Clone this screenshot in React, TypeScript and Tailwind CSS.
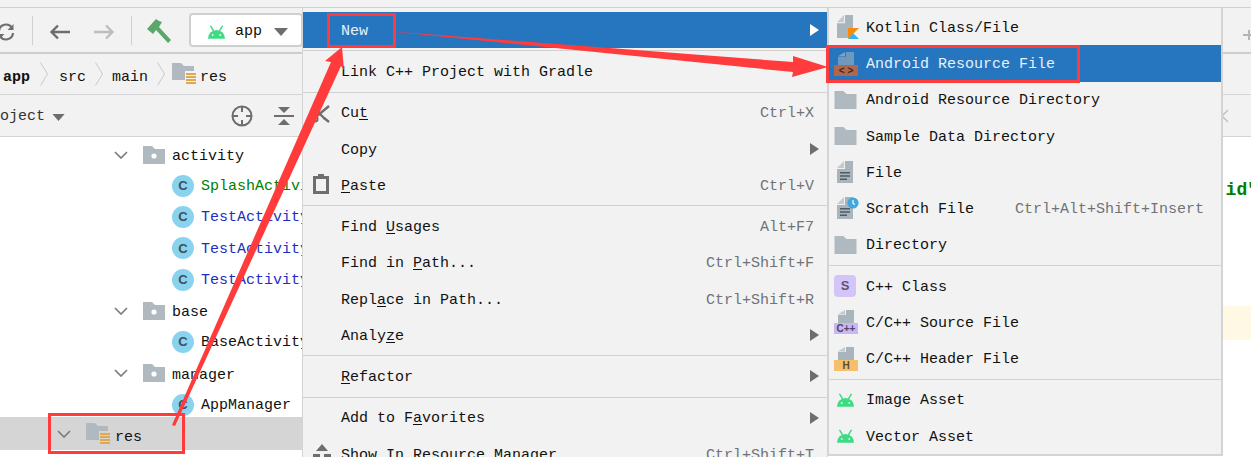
import type { ReactNode } from "react";

const RED = "#ff3b3b";

function Tri({ dir, color, className }: { dir: "down" | "right" | "up"; color: string; className: string }) {
  const points = dir === "down" ? "0,0 14,0 7,8" : dir === "right" ? "0,0 9,6 0,12" : "7,0 14,8 0,8";
  const box = dir === "right" ? "0 0 9 12" : "0 0 14 8";
  return (
    <svg viewBox={box} className={className}>
      <polygon points={points} fill={color} />
    </svg>
  );
}

function Android({ className }: { className: string }) {
  return (
    <svg viewBox="0 0 20 14" className={className}>
      <path d="M1 14a9 9 0 0 1 18 0z" fill="#3ddc84" />
      <path d="M4 1l2.6 4.4M16 1l-2.6 4.4" stroke="#3ddc84" strokeWidth="1.6" strokeLinecap="round" />
      <circle cx="6" cy="10.2" r="1" fill="#f2f2f2" />
      <circle cx="14" cy="10.2" r="1" fill="#f2f2f2" />
    </svg>
  );
}

function Folder({ className, dot }: { className: string; dot?: boolean }) {
  return (
    <svg viewBox="0 0 22 18" className={className}>
      <path d="M0 0h9l3 3h10v15H0z" fill="#afb9bf" />
      {dot && <circle cx="11" cy="10" r="2.6" fill="#fff" />}
    </svg>
  );
}

function ResFolder({ className }: { className: string }) {
  return (
    <svg viewBox="0 0 24 22" className={className}>
      <path d="M0 0h9l3 3h10v5H13v9H0z" fill="#afb9bf" />
      <path d="M14 10h10v2H14zM14 13h10v2H14zM14 16h10v2H14zM14 19h10v2H14z" fill="#e0a94f" />
    </svg>
  );
}

function Page({ className, lines, opacity = 1 }: { className: string; lines?: boolean; opacity?: number }) {
  return (
    <svg viewBox="0 0 16 22" preserveAspectRatio="none" className={className} style={{ opacity }}>
      <path d="M8 0h8v22H0V8h8z" fill="#a9b5bc" />
      <path d="M7 0v7H0z" fill="#c3cbd0" />
      {lines && <path d="M3 11h10v1.6H3zM3 14.2h10v1.6H3zM3 17.4h7V19H3z" fill="#4f5a60" />}
    </svg>
  );
}

function BarFile({ bar, label, text, dim }: { bar: string; label: string; text: string; dim?: boolean }) {
  return (
    <div className="flex w-[24px] flex-col items-end">
      <Page className="mr-[4px] h-[13px] w-[16px]" opacity={dim ? 0.55 : 1} />
      <div
        className="flex h-[11px] w-[24px] items-center justify-center font-['Liberation_Sans',sans-serif] text-[10px] leading-none font-bold whitespace-pre"
        style={{ backgroundColor: bar, color: text }}
      >
        {label}
      </div>
    </div>
  );
}

function Row({
  label,
  under,
  shortcut,
  arrow,
  icon,
  active,
  pad,
}: {
  label: string;
  under?: number;
  shortcut?: string;
  arrow?: boolean;
  icon?: ReactNode;
  active?: boolean;
  pad: string;
}) {
  return (
    <div className={`relative flex h-[36.25px] shrink-0 items-center pt-[4px] ${pad} ${active ? "bg-[#2675bf] text-[#e8f0f7]" : "text-[#111]"}`}>
      {icon}
      <span className="whitespace-pre">
        {under === undefined ? (
          label
        ) : (
          <>
            {label.slice(0, under)}
            <span className="underline decoration-1 underline-offset-2">{label[under]}</span>
            {label.slice(under + 1)}
          </>
        )}
      </span>
      {shortcut && <span className="ml-auto text-[#6f7378]">{shortcut}</span>}
      {arrow && <Tri dir="right" color={active ? "#ffffff" : "#6e6e6e"} className="absolute top-[12px] right-[8px] h-[12px] w-[9px]" />}
    </div>
  );
}

function Sep() {
  return (
    <div className="flex h-[5px] shrink-0 items-center">
      <div className="h-px w-full bg-[#d1d1d1]" />
    </div>
  );
}

function MainMenu() {
  const pad = "pl-[38px] pr-[13px]";
  return (
    <div className="absolute top-[8px] left-[302px] flex h-[449px] w-[526px] flex-col overflow-hidden border-x border-[#d4d4d4] bg-[#f2f2f2] pt-[4px]">
      <Row pad={pad} label="New" arrow active />
      <Sep />
      <Row pad={pad} label="Link C++ Project with Gradle" />
      <Sep />
      <Row
        pad={pad}
        label="Cut"
        under={2}
        shortcut="Ctrl+X"
        icon={
          <svg viewBox="0 0 18 18" className="absolute top-[10px] left-[9px] h-[18px] w-[18px]">
            <path d="M1 2l12 12M17 1L5 11" stroke="#6e6e6e" strokeWidth="2.4" fill="none" />
            <circle cx="3" cy="14" r="2.6" stroke="#6e6e6e" strokeWidth="2" fill="none" />
            <path d="M12 13l5 4" stroke="#6e6e6e" strokeWidth="2.4" />
          </svg>
        }
      />
      <Row pad={pad} label="Copy" arrow />
      <Row
        pad={pad}
        label="Paste"
        under={0}
        shortcut="Ctrl+V"
        icon={
          <svg viewBox="0 0 16 20" className="absolute top-[7px] left-[10px] h-[20px] w-[16px]">
            <path d="M1.5 3.5h13v15h-13z" stroke="#6e6e6e" strokeWidth="3" fill="none" />
            <path d="M5 0h6v5H5z" fill="#6e6e6e" />
          </svg>
        }
      />
      <Sep />
      <Row pad={pad} label="Find Usages" under={5} shortcut="Alt+F7" />
      <Row pad={pad} label="Find in Path..." under={8} shortcut="Ctrl+Shift+F" />
      <Row pad={pad} label="Replace in Path..." under={4} shortcut="Ctrl+Shift+R" />
      <Row pad={pad} label="Analyze" under={5} arrow />
      <Sep />
      <Row pad={pad} label="Refactor" under={0} arrow />
      <Sep />
      <Row pad={pad} label="Add to Favorites" under={8} arrow />
      <Row
        pad={pad}
        label="Show In Resource Manager"
        shortcut="Ctrl+Shift+T"
        icon={
          <svg viewBox="0 0 18 14" className="absolute top-[8px] left-[10px] h-[14px] w-[18px]">
            <polygon points="9,0 15,7 3,7" fill="#6e6e6e" />
            <path d="M0 10h7v4H0zM11 10h7v4h-7z" fill="#6e6e6e" />
          </svg>
        }
      />
    </div>
  );
}

function SubMenu() {
  const pad = "pl-[37px] pr-[17px]";
  const slot = "absolute left-[5px] flex items-center";
  return (
    <div className="absolute top-[8px] left-[828px] flex h-[448px] w-[395px] flex-col border-r-2 border-b-2 border-l border-[#d4d4d4] bg-[#f2f2f2] pt-px">
      <Row
        pad={pad}
        label="Kotlin Class/File"
        icon={
          <div className="absolute top-[6px] left-[8px] h-[24px] w-[22px]">
            <Page className="h-[23px] w-[16px]" />
            <svg viewBox="0 0 11 11" className="absolute right-0 bottom-0 h-[11px] w-[11px]">
              <path d="M0 0h11L5.5 5.5 0 11z" fill="#f88909" />
              <path d="M0 11L5.5 5.5 11 11z" fill="#29b6f6" />
            </svg>
          </div>
        }
      />
      <Row
        pad={pad}
        label="Android Resource File"
        active
        icon={
          <div className={`${slot} top-[7px]`}>
            <BarFile bar="#b0674d" label="< >" text="#3c2a22" dim />
          </div>
        }
      />
      <Row pad={pad} label="Android Resource Directory" icon={<Folder className={`${slot} top-[9px] h-[18px] w-[23px]`} />} />
      <Row pad={pad} label="Sample Data Directory" icon={<Folder className={`${slot} top-[9px] h-[18px] w-[23px]`} />} />
      <Row pad={pad} label="File" icon={<Page lines className="absolute top-[7px] left-[8px] h-[22px] w-[16px]" />} />
      <Row
        pad={pad}
        label="Scratch File"
        shortcut="Ctrl+Alt+Shift+Insert"
        icon={
          <div className="absolute top-[7px] left-[8px] h-[23px] w-[22px]">
            <Page lines className="h-[22px] w-[16px]" />
            <svg viewBox="0 0 12 12" className="absolute top-0 left-[10px] h-[12px] w-[12px]">
              <circle cx="6" cy="6" r="5.6" fill="#3fa9dd" />
              <path d="M6 3v3.4l2 1.2" stroke="#fff" strokeWidth="1.2" fill="none" />
            </svg>
          </div>
        }
      />
      <Row pad={pad} label="Directory" icon={<Folder className={`${slot} top-[9px] h-[18px] w-[23px]`} />} />
      <Sep />
      <Row
        pad={pad}
        label="C++ Class"
        icon={
          <div className="absolute top-[7px] left-[5px] flex h-[22px] w-[22px] items-center justify-center rounded-[4px] bg-[#d4c4f7] font-['Liberation_Sans',sans-serif] text-[13px] font-bold text-[#5c5470]">
            S
          </div>
        }
      />
      <Row
        pad={pad}
        label="C/C++ Source File"
        icon={
          <div className={`${slot} top-[6px]`}>
            <BarFile bar="#c9b6f2" label="C++" text="#4d4763" />
          </div>
        }
      />
      <Row
        pad={pad}
        label="C/C++ Header File"
        icon={
          <div className={`${slot} top-[7px]`}>
            <BarFile bar="#f5bf6c" label="H" text="#5b4a30" />
          </div>
        }
      />
      <Sep />
      <Row pad={pad} label="Image Asset" icon={<Android className="absolute top-[11px] left-[7px] h-[14px] w-[19px]" />} />
      <Row pad={pad} label="Vector Asset" icon={<Android className="absolute top-[11px] left-[7px] h-[14px] w-[19px]" />} />
    </div>
  );
}

function TreeFolder({ label, indent, selected, res }: { label: string; indent: string; selected?: boolean; res?: boolean }) {
  return (
    <div className={`flex items-center ${indent} ${selected ? "mt-[-3px] h-[33px] bg-[#d5d5d5]" : "h-[31.25px]"}`}>
      <svg viewBox="0 0 14 8" className="mr-[15px] h-[8px] w-[14px]">
        <path d="M1 1l6 6 6-6" stroke="#7d7d7d" strokeWidth="1.7" fill="none" />
      </svg>
      {res ? <ResFolder className="mr-[5px] h-[22px] w-[24px]" /> : <Folder dot className="mr-[7px] h-[18px] w-[22px]" />}
      <span className={`text-[#111] ${res ? "pt-[8px]" : "pt-[5px]"}`}>{label}</span>
    </div>
  );
}

function TreeClass({ label, color }: { label: string; color: string }) {
  return (
    <div className="flex h-[31.25px] items-center pl-[172px] whitespace-nowrap">
      <div className="mr-[7px] flex h-[22px] w-[22px] shrink-0 items-center justify-center rounded-full bg-[#8ad3ef] font-['Liberation_Sans',sans-serif] text-[13px] font-bold text-[#3f4f5c]">
        C
      </div>
      <span className="pt-[3px]" style={{ color }}>{label}</span>
    </div>
  );
}

function Toolbar() {
  return (
    <div className="flex h-[46px] shrink-0 items-center border-b-2 border-[#cdcdcd]">
      <svg viewBox="0 0 20 20" className="mt-[3px] ml-[-4px] h-[20px] w-[20px]">
        <path d="M3 9a7 7 0 0 1 13-3M17 11a7 7 0 0 1-13 3" stroke="#6e6e6e" strokeWidth="2.2" fill="none" />
        <path d="M17.5 2v6h-6zM2.5 18v-6h6z" fill="#6e6e6e" />
      </svg>
      <div className="ml-[16px] h-[29px] w-px bg-[#d0d0d0]" />
      <svg viewBox="0 0 22 16" className="mt-[4px] ml-[16px] h-[16px] w-[22px]">
        <path d="M21 8H3M9 1.5L2.5 8 9 14.5" stroke="#6e6e6e" strokeWidth="2.4" fill="none" />
      </svg>
      <svg viewBox="0 0 22 16" className="mt-[4px] ml-[22px] h-[16px] w-[22px]">
        <path d="M1 8h18M13 1.5L19.5 8 13 14.5" stroke="#bdbdbd" strokeWidth="2.4" fill="none" />
      </svg>
      <div className="ml-[16px] h-[29px] w-px bg-[#d0d0d0]" />
      <svg viewBox="0 0 24 24" className="mt-[2px] ml-[15px] h-[24px] w-[24px]">
        <path d="M0 10L9 0l3 2 3 1-3 5 12 13-3 3L9 11l-3 4z" fill="#59a869" />
      </svg>
      <div className="ml-[18px] flex h-[34px] w-[114px] items-center rounded-[4px] border-2 border-[#cfcfcf] bg-white pt-[4px] pl-[16px]">
        <Android className="h-[14px] w-[19px]" />
        <span className="ml-[9px] text-[#111]">app</span>
        <Tri dir="down" color="#6e6e6e" className="ml-[12px] h-[8px] w-[14px]" />
      </div>
      <svg viewBox="0 0 16 14" className="mt-[10px] mr-[-8px] ml-auto h-[14px] w-[16px]">
        <path d="M0 7h16M6 2v10" stroke="#b5b5b5" strokeWidth="2" />
      </svg>
    </div>
  );
}

function Crumb() {
  return (
    <svg viewBox="0 0 8 24" className="h-[24px] w-[8px]">
      <path d="M.5.5L7.5 12 .5 23.5" stroke="#c9c9c9" strokeWidth="1" fill="none" />
    </svg>
  );
}

function Breadcrumb() {
  return (
    <div className="flex h-[41px] shrink-0 items-center border-b border-[#d4d4d4] pl-[3px] text-[#111]">
      <span className="pt-[8px] font-bold">app</span>
      <span className="ml-[10px]"><Crumb /></span>
      <span className="ml-[11px] pt-[8px]">src</span>
      <span className="ml-[9px]"><Crumb /></span>
      <span className="ml-[9px] pt-[8px]">main</span>
      <span className="ml-[9px]"><Crumb /></span>
      <ResFolder className="ml-[7px] h-[22px] w-[24px]" />
      <span className="ml-[4px] pt-[8px]">res</span>
    </div>
  );
}

function ProjectBar() {
  return (
    <div className="flex h-[42px] shrink-0 items-center border-b border-[#d4d4d4]">
      <div className="flex w-[303px] shrink-0 items-center">
        <span className="ml-[-18px] pt-[4px] text-[#333]">Project</span>
        <Tri dir="down" color="#6e6e6e" className="mt-[3px] ml-[7px] h-[7px] w-[13px]" />
        <svg viewBox="0 0 22 22" className="ml-[166px] h-[22px] w-[22px]">
          <circle cx="11" cy="11" r="9.5" stroke="#6e6e6e" strokeWidth="2" fill="none" />
          <path d="M11 1v6M11 15v6M1 11h6M15 11h6" stroke="#6e6e6e" strokeWidth="2" />
        </svg>
        <svg viewBox="0 0 20 20" className="ml-[21px] h-[20px] w-[20px]">
          <path d="M0 10h20" stroke="#6e6e6e" strokeWidth="2" />
          <path d="M4 1h12l-6 6zM4 19h12l-6-6z" fill="#6e6e6e" />
        </svg>
      </div>
      <svg viewBox="0 0 8 14" className="mr-[22px] ml-auto h-[14px] w-[8px]">
        <path d="M7 1L1 7l6 6" stroke="#c4c4c4" strokeWidth="1.6" fill="none" />
      </svg>
    </div>
  );
}

function Overlay() {
  return (
    <>
      <svg viewBox="0 0 1251 457" className="pointer-events-none absolute inset-0 h-[457px] w-[1251px]">
        <polygon points="172,425 331,62 325,61 342,47 344,70 341,66 175,426" fill={RED} />
        <polygon points="386,31 793,62 793,56 828,67 792,77 793,72" fill={RED} />
      </svg>
      <div className="absolute top-[13px] left-[327px] h-[35px] w-[69px] border-[3px] border-[#ff3b3b]" />
      <div className="absolute top-[45px] left-[826px] h-[38px] w-[254px] border-[3px] border-[#ff3b3b]" />
      <div className="absolute top-[413px] left-[48px] h-[41px] w-[137px] border-[3px] border-[#ff3b3b]" />
    </>
  );
}

export default function App() {
  return (
    <div className="relative flex h-[457px] w-[1251px] flex-col overflow-hidden bg-[#f2f2f2] font-['Liberation_Mono',monospace] text-[15px]">
      <div className="h-[8px] shrink-0 border-b border-[#d0d0d0]" />
      <Toolbar />
      <Breadcrumb />
      <ProjectBar />
      <div className="flex min-h-0 flex-1 bg-white">
        <div className="w-[303px] shrink-0 overflow-hidden pt-[2px]">
          <TreeFolder label="activity" indent="pl-[114px]" />
          <TreeClass label="SplashActivity" color="#008000" />
          <TreeClass label="TestActivity" color="#1c2fc0" />
          <TreeClass label="TestActivity" color="#1c2fc0" />
          <TreeClass label="TestActivity" color="#1c2fc0" />
          <TreeFolder label="base" indent="pl-[114px]" />
          <TreeClass label="BaseActivity" color="#111111" />
          <TreeFolder label="manager" indent="pl-[114px]" />
          <TreeClass label="AppManager" color="#111111" />
          <TreeFolder label="res" indent="pl-[57px]" selected res />
        </div>
        <div className="flex flex-1 flex-col pt-[40px]">
          <div className="mr-[-7px] flex justify-end text-[18px] leading-[26px] font-bold text-[#008000]">id"</div>
          <div className="mt-[103px] h-[34px] bg-[#fef8e4]" />
        </div>
      </div>
      <MainMenu />
      <SubMenu />
      <Overlay />
    </div>
  );
}
